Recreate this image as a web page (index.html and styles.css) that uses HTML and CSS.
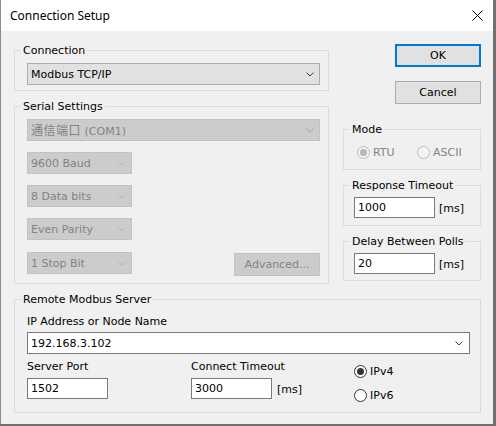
FILE: index.html
```html
<!DOCTYPE html>
<html>
<head>
<meta charset="utf-8">
<title>Connection Setup</title>
<link rel="stylesheet" href="styles.css">
</head>
<body>
<div class="window">
  <div class="titlebar">
    <span class="title">Connection Setup</span>
    <svg class="close" width="11" height="11" viewBox="0 0 11 11"><path d="M0.5 0.5L10.5 10.5M10.5 0.5L0.5 10.5" stroke="#000" stroke-width="1" fill="none"/></svg>
  </div>
  <div class="client">
    <div class="top">
      <div class="left">
        <div class="group g-conn">
          <div class="gtitle">Connection</div>
          <div class="combo wide">
            <span>Modbus TCP/IP</span>
            <svg class="chev" width="8" height="5" viewBox="0 0 8 5"><path d="M0.5 0.5L4 4L7.5 0.5" fill="none" stroke="#444"/></svg>
          </div>
        </div>
        <div class="group g-serial">
          <div class="gtitle">Serial Settings</div>
          <div class="combo wide dis">
            <span><span class="cjk">通信端口</span> (COM1)</span>
            <svg class="chev" width="8" height="5" viewBox="0 0 8 5"><path d="M0.5 0.5L4 4L7.5 0.5" fill="none" stroke="#a6a6a6"/></svg>
          </div>
          <div class="combo small dis row">
            <span>9600 Baud</span>
            <svg class="chev" width="8" height="5" viewBox="0 0 8 5"><path d="M0.5 0.5L4 4L7.5 0.5" fill="none" stroke="#b4b4b4"/></svg>
          </div>
          <div class="combo small dis row">
            <span>8 Data bits</span>
            <svg class="chev" width="8" height="5" viewBox="0 0 8 5"><path d="M0.5 0.5L4 4L7.5 0.5" fill="none" stroke="#b4b4b4"/></svg>
          </div>
          <div class="combo small dis row">
            <span>Even Parity</span>
            <svg class="chev" width="8" height="5" viewBox="0 0 8 5"><path d="M0.5 0.5L4 4L7.5 0.5" fill="none" stroke="#b4b4b4"/></svg>
          </div>
          <div class="lastrow">
            <div class="combo small dis">
              <span>1 Stop Bit</span>
              <svg class="chev" width="8" height="5" viewBox="0 0 8 5"><path d="M0.5 0.5L4 4L7.5 0.5" fill="none" stroke="#b4b4b4"/></svg>
            </div>
            <div class="btn dis adv">Advanced...</div>
          </div>
        </div>
      </div>
      <div class="right">
        <div class="btns">
          <div class="btn default">OK</div>
          <div class="btn">Cancel</div>
        </div>
        <div class="group g-mode">
          <div class="gtitle">Mode</div>
          <div class="radios-h">
            <div class="radio dis first"><span class="rb on"></span><span>RTU</span></div>
            <div class="radio dis"><span class="rb"></span><span>ASCII</span></div>
          </div>
        </div>
        <div class="group g-time">
          <div class="gtitle">Response Timeout</div>
          <div class="field">
            <div class="input">1000</div><span class="unit">[ms]</span>
          </div>
        </div>
        <div class="group g-time g-delay">
          <div class="gtitle">Delay Between Polls</div>
          <div class="field">
            <div class="input">20</div><span class="unit">[ms]</span>
          </div>
        </div>
      </div>
    </div>
    <div class="group g-remote">
      <div class="gtitle">Remote Modbus Server</div>
      <div class="lbl ip-lbl">IP Address or Node Name</div>
      <div class="combo edit">
        <span>192.168.3.102</span>
        <svg class="chev" width="8" height="5" viewBox="0 0 8 5"><path d="M0.5 0.5L4 4L7.5 0.5" fill="none" stroke="#444"/></svg>
      </div>
      <div class="r3">
        <div class="c1">
          <div class="lbl">Server Port</div>
          <div class="field"><div class="input">1502</div></div>
        </div>
        <div class="c2">
          <div class="lbl">Connect Timeout</div>
          <div class="field ct"><div class="input">3000</div><span class="unit">[ms]</span></div>
        </div>
        <div class="c3">
          <div class="radio"><span class="rb on"></span><span>IPv4</span></div>
          <div class="radio"><span class="rb"></span><span>IPv6</span></div>
        </div>
      </div>
    </div>
  </div>
</div>
</body>
</html>
```
FILE: styles.css
```css
* { box-sizing: border-box; }
html, body { margin: 0; padding: 0; }
body {
  width: 496px;
  height: 426px;
  overflow: hidden;
  background: #707070;
  font: 11px/13px "DejaVu Sans", "Noto Sans CJK SC", sans-serif;
  color: #000;
}
.window {
  width: 493px;
  height: 424px;
  background: #f0f0f0;
  border-left: 1px solid #8c8c8c;
}
.titlebar {
  height: 31px;
  background: #fff;
  display: flex;
  align-items: center;
  justify-content: space-between;
  padding: 0 10px 0 9px;
}
.title { font: 12px/16px "Noto Sans", sans-serif; margin-top: 1px; }
.close { display: block; margin-top: 0; }
.client { padding: 13px 0 0 13px; }
.top {
  display: grid;
  grid-template-columns: 315px 138px;
  column-gap: 14px;
  align-items: start;
}
.left { padding-top: 6px; }

.group { border: 1px solid #dcdcdc; --pl: 12px; padding-left: var(--pl); }
.gtitle {
  width: max-content;
  margin: -7px 0 0 calc(6px - var(--pl));
  padding: 0 2px;
  background: #f0f0f0;
  height: 13px;
}
.g-conn { padding-bottom: 5px; }
.g-conn .combo { margin-top: 6px; }
.g-serial { margin-top: 15px; padding-bottom: 7px; }
.g-serial .wide { margin-top: 6px; }
.g-serial .row { margin-top: 11px; }

.combo {
  height: 22px;
  border: 1px solid #adadad;
  background: #e1e1e1;
  display: flex;
  align-items: center;
  justify-content: space-between;
  padding: 0 5px 0 3px;
  white-space: nowrap;
}
.combo .chev { display: block; flex: none; }
.combo.wide { width: 293px; }
.combo.small { width: 105px; }
.combo.dis { background: #cccccc; border-color: #c2c2c2; color: #838383; }
.combo.edit { width: 443px; background: #fff; border-color: #7a7a7a; margin-top: 4px; padding-right: 6px; }
.cjk { font-size: 12px; font-family: "Noto Sans CJK SC", sans-serif; letter-spacing: 0.5px; }

.lastrow {
  width: 293px;
  margin-top: 12px;
  display: flex;
  justify-content: space-between;
  align-items: flex-start;
}
.btn {
  width: 86px;
  height: 23px;
  border: 1px solid #adadad;
  background: #e1e1e1;
  display: flex;
  align-items: center;
  justify-content: center;
}
.btn.default { border: 2px solid #0078d7; }
.btn.dis { background: #cccccc; border-color: #c2c2c2; color: #838383; }
.btn.adv { margin-top: 1px; }

.btns { display: flex; flex-direction: column; align-items: flex-end; gap: 14px; }

.g-mode { margin-top: 25px; --pl: 13px; padding-bottom: 10px; }
.radios-h { display: flex; margin-top: 10px; }
.radio { display: flex; align-items: center; gap: 3px; height: 13px; }
.radio.first { width: 60px; }
.radio.dis { color: #838383; }
.rb {
  width: 13px;
  height: 13px;
  border-radius: 50%;
  border: 1px solid #333;
  background: #fff;
  display: flex;
  align-items: center;
  justify-content: center;
  flex: none;
}
.rb.on::after {
  content: "";
  width: 7px;
  height: 7px;
  border-radius: 50%;
  background: #333;
}
.radio.dis .rb { border-color: #bcbcbc; background: #f4f4f4; }
.radio.dis .rb.on::after { background: #b8b8b8; }

.g-time { margin-top: 15px; --pl: 10px; padding-bottom: 7px; }
.g-delay { padding-bottom: 6px; }
.g-time .field { margin-top: 5px; }
.field { display: flex; align-items: center; gap: 4px; }
.field.ct { gap: 5px; }
.input {
  width: 81px;
  height: 21px;
  border: 1px solid #7a7a7a;
  background: #fff;
  padding-left: 3px;
  display: flex;
  align-items: center;
}
.unit { margin-top: 1px; }

.g-remote { margin-top: 15px; width: 467px; padding-bottom: 10px; }
.lbl { height: 13px; }
.ip-lbl { margin-top: 9px; }
.r3 { display: flex; margin-top: 6px; }
.r3 .field { margin-top: 5px; }
.c1 { width: 164px; }
.c2 { width: 163px; }
.c3 { padding-top: 5px; display: flex; flex-direction: column; gap: 11px; }
```
